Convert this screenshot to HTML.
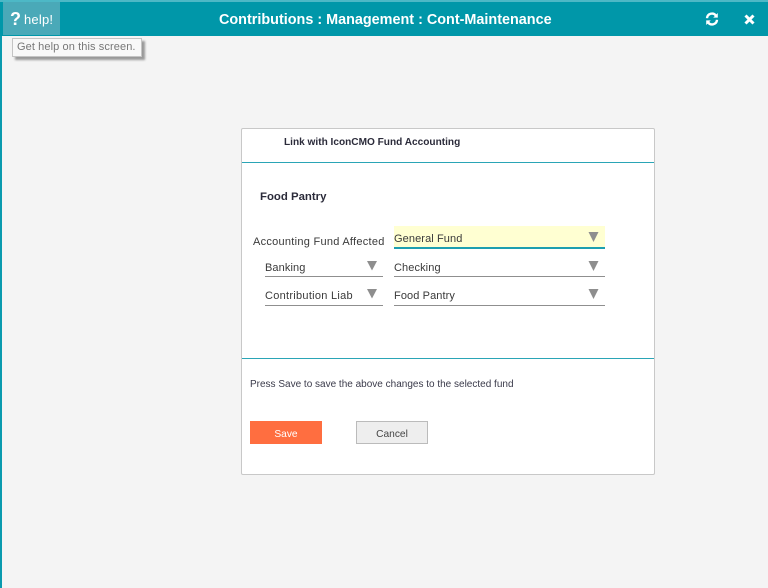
<!DOCTYPE html>
<html><head><meta charset="utf-8"><style>
html,body{margin:0;padding:0}
body{width:768px;height:588px;background:#f4f4f4;position:relative;overflow:hidden;font-family:"Liberation Sans",sans-serif;color:#333}
div{position:absolute;box-sizing:border-box;white-space:nowrap}
.t{font-size:11px;line-height:14px;color:#3a3a3a;letter-spacing:.1px}
.l{height:1px;background:#8f8f8f}
</style></head><body>
<div style="left:0;top:0;width:2px;height:588px;background:#0a9aae"></div>
<div style="left:0;top:0;width:768px;height:36px;background:#0097a9"></div>
<div style="left:0;top:0;width:768px;height:2px;background:#4db8c6"></div>
<div style="left:3px;top:2px;width:57px;height:33px;background:#4aa9b8"></div>
<div style="left:10px;top:9px;font-size:18px;line-height:20px;font-weight:bold;color:#fff">?</div>
<div style="left:24px;top:12px;font-size:13px;line-height:15px;color:#fff;letter-spacing:.2px">help!</div>
<div style="left:219px;top:11px;width:332px;font-size:14.4px;line-height:18px;font-weight:bold;color:#fff;text-align:center">Contributions : Management : Cont-Maintenance</div>
<svg style="position:absolute;left:705px;top:12px" width="14" height="14" viewBox="0 0 14 14"><path d="M2 6.200A5 5 0 0 1 11 3.600M12 7.800A5 5 0 0 1 3 10.400" fill="none" stroke="#fff" stroke-width="2.400"/><path d="M12.800 1V5.600H8.200ZM1.200 13V8.400H5.800Z" fill="#fff"/></svg>
<svg style="position:absolute;left:744px;top:14px" width="11" height="11" viewBox="0 0 11 11"><path d="M1.500 1.500L9.500 9.500M9.500 1.500L1.500 9.500" stroke="#fff" stroke-width="3"/></svg>
<div style="left:12px;top:38px;width:130px;height:19px;background:#f8f8f8;border:1px solid #c4c4c4;box-shadow:3px 3px 2px #999;font-size:11px;line-height:17px;color:#777;padding-left:4px;letter-spacing:.1px">Get help on this screen.</div>

<div style="left:241px;top:128px;width:414px;height:347px;background:#fff;border:1px solid #c8c8c8;border-radius:2px"></div>
<div style="left:242px;top:162px;width:412px;height:1px;background:#2aa5b6"></div>
<div style="left:284px;top:136px;font-size:10.1px;line-height:14px;font-weight:bold;color:#2b2b3a">Link with IconCMO Fund Accounting</div>
<div style="left:260px;top:190px;font-size:11.4px;line-height:14px;font-weight:bold;color:#2b2b3a">Food Pantry</div>
<div class="t" style="left:253px;top:235px;letter-spacing:.27px">Accounting Fund Affected</div>

<div style="left:394px;top:226px;width:211px;height:22px;background:#ffffd2"></div>
<div style="left:394px;top:247px;width:211px;height:2px;background:#1d9fb0"></div>
<div class="t" style="left:394px;top:232px">General Fund</div>
<div class="t" style="left:265px;top:261px">Banking</div>
<div class="t" style="left:394px;top:261px">Checking</div>
<div class="t" style="left:265px;top:289px;letter-spacing:.28px">Contribution Liab</div>
<div class="t" style="left:394px;top:289px">Food Pantry</div>
<div class="l" style="left:265px;top:276px;width:118px"></div>
<div class="l" style="left:394px;top:276px;width:211px"></div>
<div class="l" style="left:265px;top:305px;width:118px"></div>
<div class="l" style="left:394px;top:305px;width:211px"></div>
<svg style="position:absolute;left:0;top:0" width="768" height="588"><path fill="#8e8e8e" d="M588.500 232h10l-5 10zM588.500 261h10l-5 10zM588.500 289h10l-5 10zM367 261h10l-5 9.500zM367 289h10l-5 9.500z"/></svg>

<div style="left:242px;top:358px;width:412px;height:1px;background:#2aa5b6"></div>
<div style="left:250px;top:378px;font-size:10px;line-height:14px;color:#3a3a4a">Press Save to save the above changes to the selected fund</div>
<div style="left:250px;top:421px;width:72px;height:23px;background:#ff6e40;color:#fff;font-size:10.200px;line-height:28px;text-align:center;overflow:hidden">Save</div>
<div style="left:356px;top:421px;width:72px;height:23px;background:#eee;border:1px solid #bbb;color:#444;font-size:10.200px;line-height:26px;text-align:center;overflow:hidden">Cancel</div>
</body></html>
